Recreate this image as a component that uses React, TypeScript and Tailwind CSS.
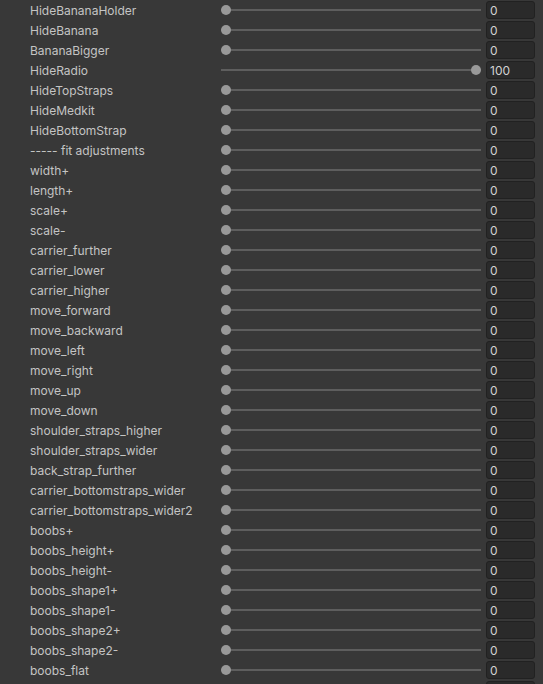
const shapes: [string, number][] = [
  ['HideBananaHolder', 0],
  ['HideBanana', 0],
  ['BananaBigger', 0],
  ['HideRadio', 100],
  ['HideTopStraps', 0],
  ['HideMedkit', 0],
  ['HideBottomStrap', 0],
  ['----- fit adjustments', 0],
  ['width+', 0],
  ['length+', 0],
  ['scale+', 0],
  ['scale-', 0],
  ['carrier_further', 0],
  ['carrier_lower', 0],
  ['carrier_higher', 0],
  ['move_forward', 0],
  ['move_backward', 0],
  ['move_left', 0],
  ['move_right', 0],
  ['move_up', 0],
  ['move_down', 0],
  ['shoulder_straps_higher', 0],
  ['shoulder_straps_wider', 0],
  ['back_strap_further', 0],
  ['carrier_bottomstraps_wider', 0],
  ['carrier_bottomstraps_wider2', 0],
  ['boobs+', 0],
  ['boobs_height+', 0],
  ['boobs_height-', 0],
  ['boobs_shape1+', 0],
  ['boobs_shape1-', 0],
  ['boobs_shape2+', 0],
  ['boobs_shape2-', 0],
  ['boobs_flat', 0],
]

function Slider({ value }: { value: number }) {
  return (
    <div className="relative w-[260px] h-5 shrink-0">
      <div className="absolute left-0 right-0 top-[9px] h-[2px] bg-[#5e5e5e]" />
      <div
        className="absolute top-[5px] w-[10px] h-[10px] rounded-full bg-[#999999]"
        style={{ left: (value / 100) * 250 }}
      />
    </div>
  )
}

function Row({ name, value }: { name: string; value: number }) {
  return (
    <div className="flex items-center h-5">
      <div className="w-[221px] shrink-0 pl-[30px] pt-[2px] text-[12px] text-[#c4c4c4] truncate">{name}</div>
      <Slider value={value} />
      <div className="ml-[5px] w-[49px] h-[18px] shrink-0 rounded-[3px] border border-[#212121] bg-[#2a2a2a] pl-[3px] pt-[1px] flex items-center text-[12px] text-[#d2d2d2]">
        {value}
      </div>
    </div>
  )
}

export default function App() {
  return (
    <div
      className="w-[543px] h-[684px] overflow-hidden bg-[#383838]"
      style={{ fontFamily: 'Inter, "Noto Sans", sans-serif' }}
    >
      {shapes.map(([name, value]) => (
        <Row key={name} name={name} value={value} />
      ))}
      {/* next row, only its field top peeks in */}
      <div className="flex h-5">
        <div className="ml-[486px] mt-px w-[49px] h-[18px] rounded-[3px] border border-[#212121] bg-[#2a2a2a]" />
      </div>
    </div>
  )
}
